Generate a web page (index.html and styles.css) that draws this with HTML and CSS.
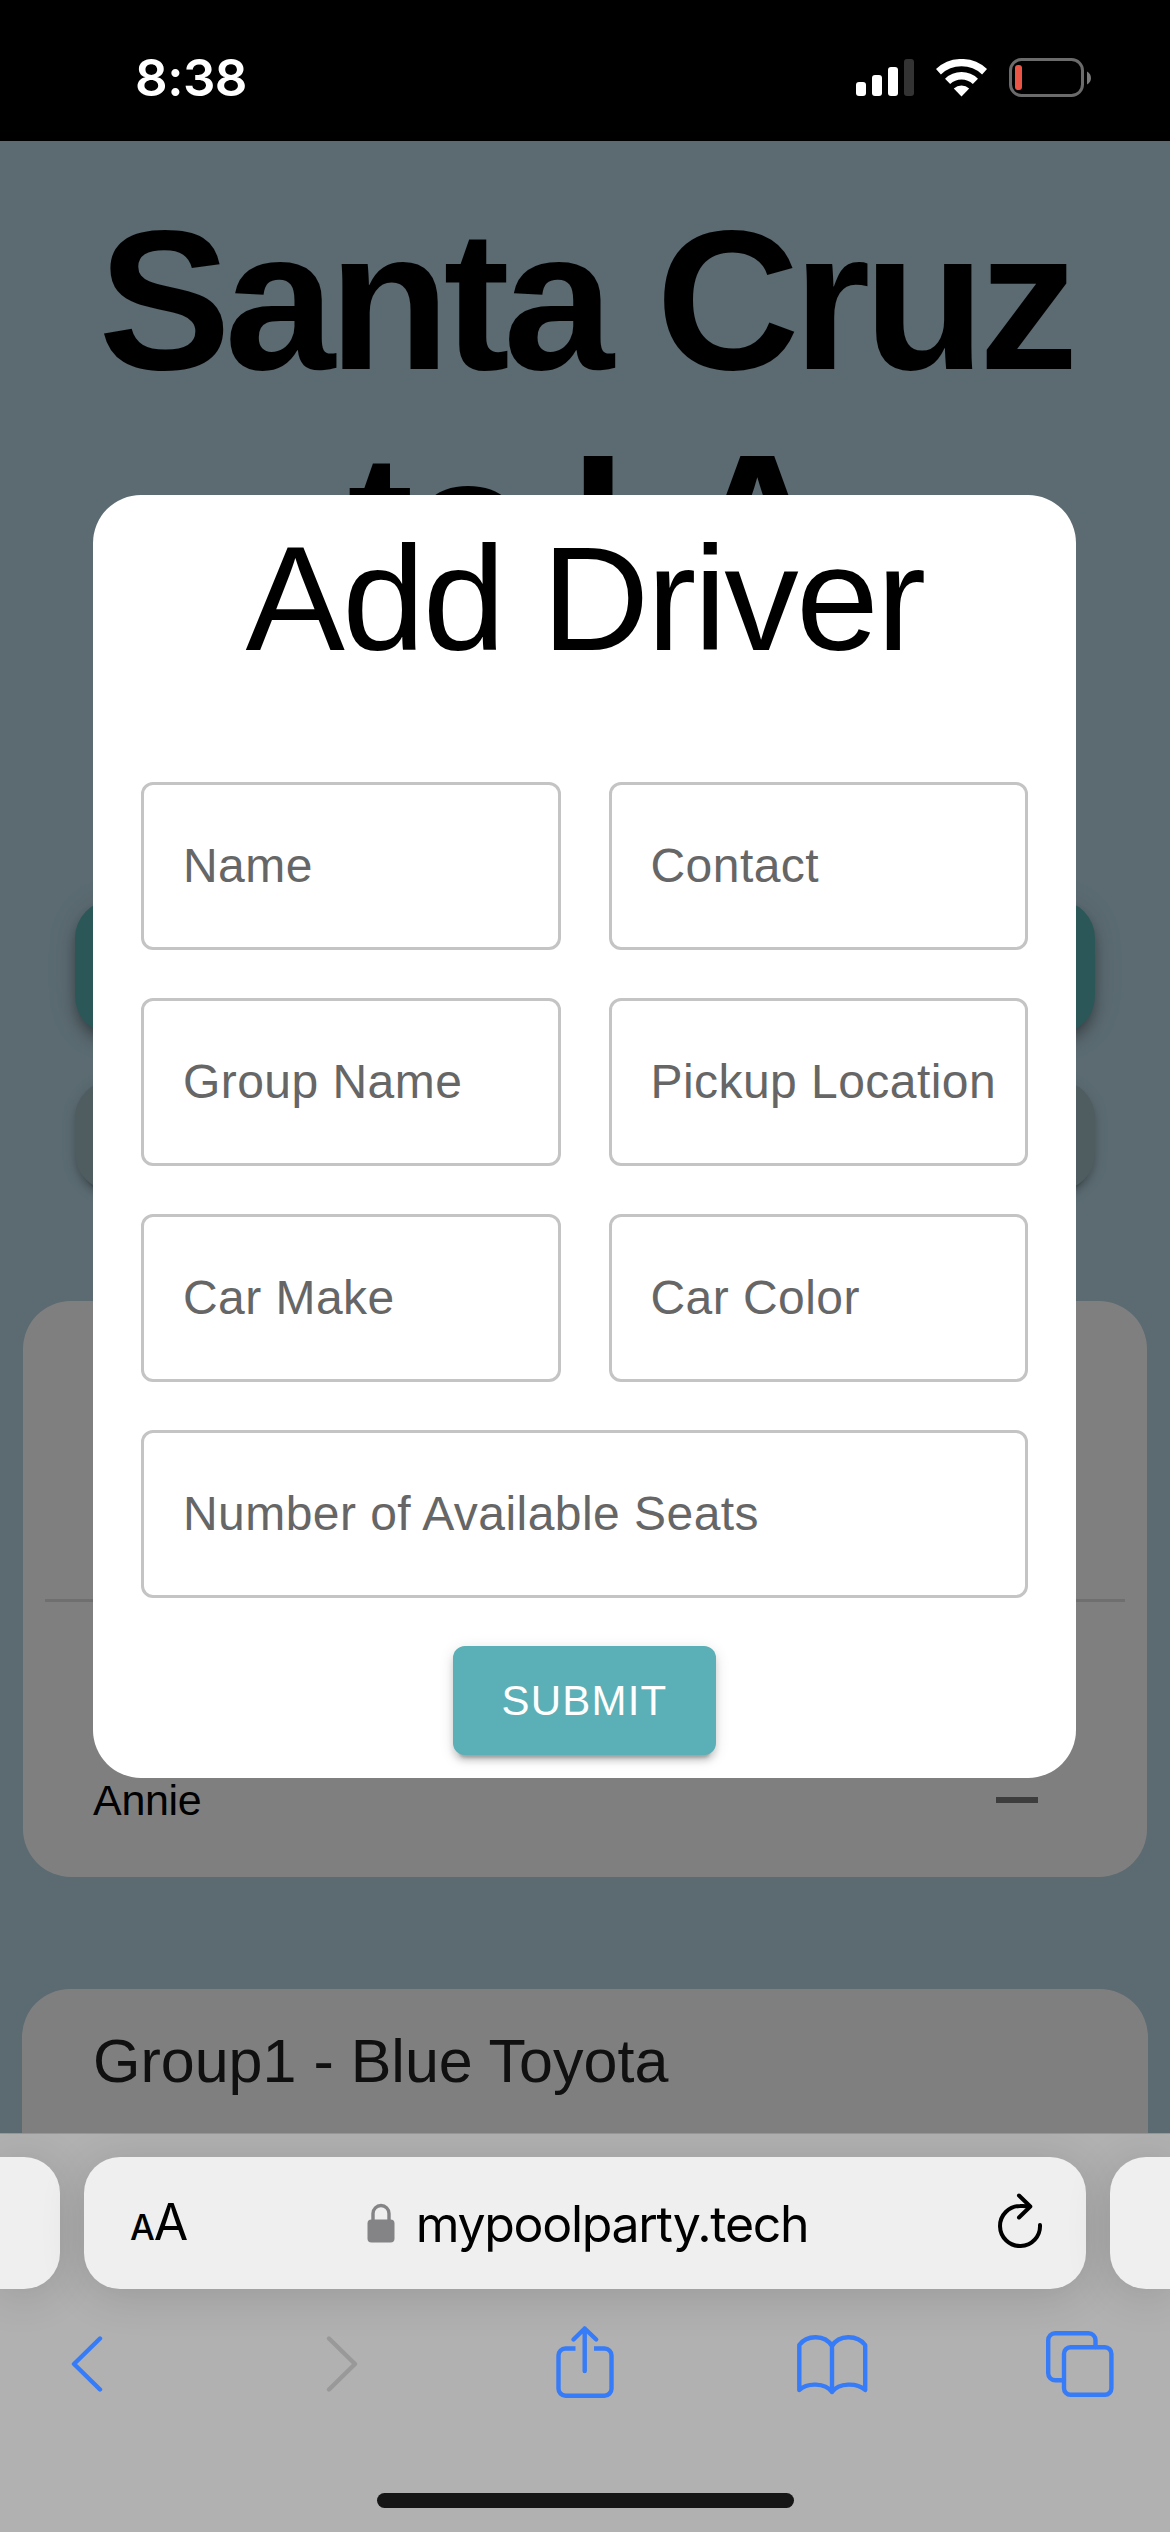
FILE: index.html
```
<!DOCTYPE html>
<html lang="en">
<head>
<meta charset="utf-8">
<title>Pool Party</title>
<link rel="stylesheet" href="styles.css">
</head>
<body>
<div class="phone">
  <header class="status">
    <span class="clock">8:38</span>
    <div class="indicators">
      <svg class="signal" width="58" height="37" viewBox="0 0 58 37" fill="#fff">
        <rect x="0" y="23" width="10" height="14" rx="3"/>
        <rect x="16" y="16" width="10" height="21" rx="3"/>
        <rect x="32" y="8" width="10" height="29" rx="3"/>
        <rect x="48" y="0" width="10" height="37" rx="3" fill="#333"/>
      </svg>
      <svg class="wifi" width="51" height="38" viewBox="0 0 51 38">
        <path d="M2.4 13.2a34 34 0 0 1 46.2 0" fill="none" stroke="#fff" stroke-width="7.4" transform="translate(0 -.5)"/>
        <path d="M11.6 22.4a20 20 0 0 1 27.8 0" fill="none" stroke="#fff" stroke-width="7.4"/>
        <path d="M17.8 29.5a11.5 11.5 0 0 1 15.4 0L25.5 37.5z" fill="#fff"/>
      </svg>
      <svg class="battery" width="83" height="40" viewBox="0 0 83 40">
        <rect x="1.5" y="1.5" width="72" height="36" rx="11" fill="none" stroke="#6b6b6b" stroke-width="3"/>
        <rect x="6" y="7" width="7" height="25" rx="3" fill="#eb5545"/>
        <path d="M78 13.5c5.300 2.500 5.300 10.500 0 13z" fill="#7a7a7a"/>
      </svg>
    </div>
  </header>

  <main class="page">
    <h1 class="trip">Santa Cruz<br>to LA</h1>
    <div class="actions">
      <div class="action action-main"></div>
      <div class="action action-muted"></div>
    </div>
    <section class="card card-first">
      <div class="card-head"></div>
      <div class="person"><span>Annie</span><i class="minus"></i></div>
    </section>
    <section class="card card-second">
      <h2 class="group">Group1 - Blue Toyota</h2>
    </section>
    <div class="backdrop">
      <form class="modal">
        <h2 class="modal-title">Add Driver</h2>
        <div class="fields">
          <label class="field">Name</label>
          <label class="field">Contact</label>
          <label class="field">Group Name</label>
          <label class="field">Pickup Location</label>
          <label class="field">Car Make</label>
          <label class="field">Car Color</label>
          <label class="field wide">Number of Available Seats</label>
        </div>
        <button class="submit" type="button">SUBMIT</button>
      </form>
    </div>
  </main>

  <footer class="browser">
    <div class="tabs">
      <div class="tab tab-prev"></div>
      <div class="tab tab-current">
        <span class="text-size"><small>A</small>A</span>
        <span class="address">
          <svg width="28" height="40" viewBox="0 0 28 40">
            <path d="M6 18V10.500a8 8 0 0 1 16 0V18" fill="none" stroke="#848486" stroke-width="3.400"/>
            <rect x=".5" y="16.500" width="27" height="23" rx="4" fill="#848486"/>
          </svg>
          <span class="host">mypoolparty.tech</span>
        </span>
        <svg class="reload" width="46" height="56" viewBox="0 0 46 56" fill="none" stroke="#000" stroke-width="4" stroke-linecap="round" stroke-linejoin="round">
          <path d="M43 32A20 20 0 1 1 23 13Q28 12.700 32.500 13.500"/>
          <path d="M22 2.500L33.300 13.500 22 24.500"/>
        </svg>
      </div>
      <div class="tab tab-next"></div>
    </div>
    <nav class="tools">
      <svg class="back" width="32" height="76" viewBox="0 0 32 76"><path d="M29 13.500L3 39 29 64.500"/></svg>
      <svg class="forward" width="32" height="76" viewBox="0 0 32 76"><path d="M3 13.500L29 39 3 64.500"/></svg>
      <svg class="share" width="58" height="76" viewBox="0 0 58 76">
        <path class="box" d="M19.500 23.500H9.500a7 7 0 0 0-7 7V63.700a7 7 0 0 0 7 7H48.500a7 7 0 0 0 7-7V30.500a7 7 0 0 0-7-7H38"/>
        <path d="M28.700 46V3.500M17.500 14.500L28.700 3.500 40.200 14.500"/>
      </svg>
      <svg class="book" width="72" height="76" viewBox="0 0 72 76">
        <path d="M36 67V21C29 9.500 11 9.500 3.300 20V65C11 57.500 29 57.500 36 67C43 57.500 61 57.500 69.200 65V20C61 9.500 43 9.500 36 21"/>
      </svg>
      <svg class="pages" width="68" height="76" viewBox="0 0 68 76">
        <rect x="18" y="22.200" width="47.400" height="47.600" rx="6.500"/>
        <path d="M18 55.300H9.200a7 7 0 0 1-7-7V15.200a7 7 0 0 1 7-7H42.500a7 7 0 0 1 7 7V22"/>
      </svg>
    </nav>
    <div class="home-bar"></div>
  </footer>
</div>
</body>
</html>
```

FILE: styles.css
```
* { box-sizing: border-box; }

body {
  margin: 0;
  background: #000;
  font-family: "Liberation Sans", Arial, sans-serif;
}

.phone {
  display: flex;
  flex-direction: column;
  width: 1170px;
  height: 2532px;
  overflow: hidden;
}

/* status bar */
.status {
  display: flex;
  justify-content: space-between;
  flex: none;
  height: 141px;
  padding: 58px 78px 0 135px;
  background: #000;
  color: #fff;
}

.clock {
  font: 600 51px/40px Inter, sans-serif;
  letter-spacing: -.5px;
}

.indicators { display: flex; align-items: flex-start; }
.signal { margin-top: 1px; }
.wifi { margin: 1px 22px 0; }

/* trip page */
.page {
  position: relative;
  flex: none;
  height: 1992px;
  overflow: hidden;
  background: #b6d6e3;
}

.trip {
  margin: 0;
  padding-top: 47px;
  font-size: 199px;
  line-height: 224px;
  letter-spacing: -6.6px;
  text-align: center;
  white-space: nowrap;
}

.actions {
  display: flex;
  flex-direction: column;
  gap: 46px;
  margin: 264px 75px 0;
}

.action {
  height: 111px;
  border-radius: 38px;
  background: #9eb9c1;
  box-shadow: 0 9px 3px -6px rgba(0, 0, 0, .2), 0 6px 6px rgba(0, 0, 0, .14), 0 3px 15px rgba(0, 0, 0, .12);
}

.action-main {
  height: 134px;
  background: #57afb3;
  box-shadow: 0 6px 12px -3px rgba(0, 0, 0, .3), 0 12px 15px rgba(0, 0, 0, .14), 0 3px 30px rgba(0, 0, 0, .12);
}

.card { background: #fff; border-radius: 48px; }

.card-first {
  height: 576px;
  margin: 110px 23px 0;
  padding: 0 22px;
}

.card-head {
  height: 301px;
  border-bottom: 3px solid #dfdfdf;
}

.person {
  display: flex;
  justify-content: space-between;
  align-items: center;
  margin-top: 168px;
  padding: 0 87px 0 48px;
  font-size: 43px;
  line-height: 60px;
  letter-spacing: -.3px;
}

.minus { width: 42px; height: 6px; background: #7b7b7b; }

.card-second {
  height: 300px;
  margin: 112px 22px 0;
  padding: 36px 71px;
}

.group {
  margin: 0;
  color: #212121;
  font-size: 61px;
  font-weight: 400;
  line-height: 72px;
}

/* dialog */
.backdrop {
  position: absolute;
  inset: 0;
  padding: 354px 94px 0 93px;
  background: rgba(0, 0, 0, .5);
}

.modal {
  display: flex;
  flex-direction: column;
  align-items: center;
  height: 1283px;
  padding: 0 48px;
  border-radius: 48px;
  background: #fff;
}

.modal-title {
  margin: 20px 0 0;
  font-size: 149px;
  font-weight: 400;
  line-height: 168px;
  letter-spacing: -2.6px;
}

.fields {
  display: grid;
  grid-template-columns: 1fr 1fr;
  gap: 48px;
  width: 100%;
  margin-top: 99px;
}

.field {
  height: 168px;
  padding-left: 39px;
  border: 3px solid #c4c4c4;
  border-radius: 12px;
  color: #666;
  font-size: 48px;
  line-height: 162px;
  letter-spacing: .45px;
  white-space: nowrap;
}

.wide { grid-column: span 2; }

.submit {
  width: 263px;
  height: 109px;
  margin-top: 48px;
  padding: 0;
  border: 0;
  border-radius: 12px;
  background: #5bafb6;
  box-shadow: 0 9px 3px -6px rgba(0, 0, 0, .2), 0 6px 6px rgba(0, 0, 0, .14), 0 3px 15px rgba(0, 0, 0, .12);
  color: #fff;
  font: 42px/109px "Liberation Sans", Arial, sans-serif;
  letter-spacing: 1.2px;
}

/* browser chrome */
.browser {
  display: flex;
  flex-direction: column;
  align-items: center;
  flex: none;
  height: 399px;
  border-top: 1px solid #989898;
  background: #b1b1b1;
}

.tabs {
  display: flex;
  justify-content: space-between;
  width: 100%;
  margin-top: 23px;
}

.tab {
  height: 132px;
  background: #efefef;
  box-shadow: 0 6px 45px rgba(0, 0, 0, .14);
}

.tab-prev { width: 60px; border-radius: 0 36px 36px 0; }
.tab-next { width: 60px; border-radius: 36px 0 0 36px; }

.tab-current {
  display: flex;
  justify-content: space-between;
  align-items: center;
  width: 1002px;
  padding: 0 43px 0 46px;
  border-radius: 36px;
}

.text-size {
  width: 60px;
  padding-top: 3px;
  font: 50px/60px Inter, sans-serif;
  letter-spacing: -1px;
  white-space: nowrap;
}

.text-size small { font-size: 35px; font-weight: 500; }

.address { display: flex; align-items: center; gap: 21px; margin-right: 12px; }
.host { padding-top: 2px; font: 50px/60px Inter, sans-serif; letter-spacing: -1.3px; }
.reload { margin-bottom: 4px; }

.tools {
  display: flex;
  width: 100%;
  margin-top: 36px;
}

.tools svg {
  fill: none;
  stroke: #367bf7;
  stroke-width: 4.400;
  stroke-linecap: round;
  stroke-linejoin: round;
}

.tools .back { margin-left: 71px; }
.tools .forward { margin-left: 223px; stroke: #999; }
.tools .share { margin-left: 198px; }
.tools .box { stroke-linecap: butt; }
.tools .book { margin-left: 182px; }
.tools .pages { margin-left: 178px; }

.home-bar {
  width: 417px;
  height: 15px;
  margin-top: 92px;
  border-radius: 8px;
  background: #161616;
}
```
